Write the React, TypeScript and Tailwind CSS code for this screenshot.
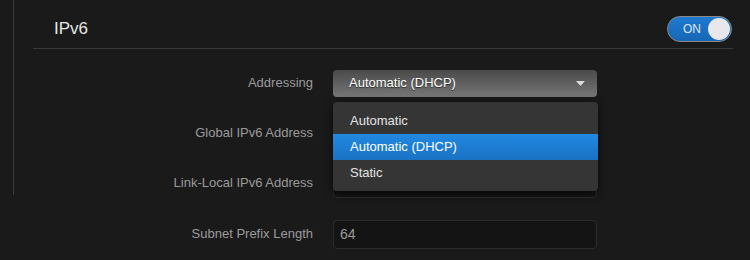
import React from "react";

const font = { fontFamily: '"Liberation Sans", Arial, sans-serif' };

function Row({ label, children, extra }: { label: string; children?: React.ReactNode; extra?: string }) {
  return (
    <div className={"flex h-[50px] items-center " + (extra ?? "")}>
      <div className="w-[280px] text-right text-[13px] text-[#9a9a9a]">{label}</div>
      <div className="ml-[20px] w-[264px]">{children}</div>
    </div>
  );
}

export default function App() {
  return (
    <div className="flex h-[260px] w-[750px] overflow-hidden bg-[#1a1a1a]" style={font}>
      <div className="w-[13px] shrink-0" />
      <div className="h-[195px] w-px shrink-0 self-start bg-[#3a3a3a]" />
      <div className="ml-[19px] w-[700px] shrink-0">
        <div className="flex h-[49px] items-center justify-between border-b border-[#3a3a3a] pl-[21px] pr-px pt-[10px]">
          <span className="text-[17px] text-[#e6e6e6]">IPv6</span>
          <div className="flex h-[26px] w-[65px] items-center justify-between rounded-full border border-[#8a8a8a] bg-gradient-to-b from-[#1f7ad0] to-[#1766b4] pl-[15px] pr-[1px]">
            <span className="text-[12px] text-[#dde6f0]">ON</span>
            <div className="h-[22px] w-[22px] rounded-full bg-[#e8e8ec]" />
          </div>
        </div>
        <div className="pt-[9px]">
          <Row label="Addressing">
            <div className="relative">
              <div className="flex h-[27px] items-center justify-between rounded-[4px] bg-gradient-to-b from-[#4a4a4a] to-[#777777] pl-[16px] pr-[12px] text-[13px] text-white [text-shadow:0_1px_1px_rgba(0,0,0,0.6)]">
                <span>Automatic (DHCP)</span>
                <svg width="9" height="5" viewBox="0 0 9 5">
                  <path d="M0 0 L9 0 L4.5 5 Z" fill="#dcdcdc" />
                </svg>
              </div>
              <div className="absolute left-0 top-[32px] z-10 w-[265px] rounded-[4px] bg-[#353535] pb-[5px] pt-[6px] shadow-[0_2px_8px_rgba(0,0,0,0.7)]">
                <div className="flex h-[26px] items-center pl-[17px] text-[13px] text-[#e4e4e4]">Automatic</div>
                <div className="flex h-[26px] items-center bg-gradient-to-b from-[#2189e2] to-[#1a72c3] pl-[17px] text-[13px] text-white">
                  Automatic (DHCP)
                </div>
                <div className="flex h-[26px] items-center pl-[17px] text-[13px] text-[#e4e4e4]">Static</div>
              </div>
            </div>
          </Row>
          <Row label="Global IPv6 Address">
            <div className="h-[29px] rounded-[4px] border border-[#2c2c2c] bg-[#141414]" />
          </Row>
          <Row label="Link-Local IPv6 Address">
            <div className="h-[29px] rounded-[4px] border border-[#2c2c2c] bg-[#141414]" />
          </Row>
          <Row label="Subnet Prefix Length" extra="mt-[1px]">
            <div className="flex h-[29px] items-center rounded-[4px] border border-[#2c2c2c] bg-[#141414] pl-[6px] text-[14px] text-[#9a9a9a]">
              64
            </div>
          </Row>
        </div>
      </div>
    </div>
  );
}
